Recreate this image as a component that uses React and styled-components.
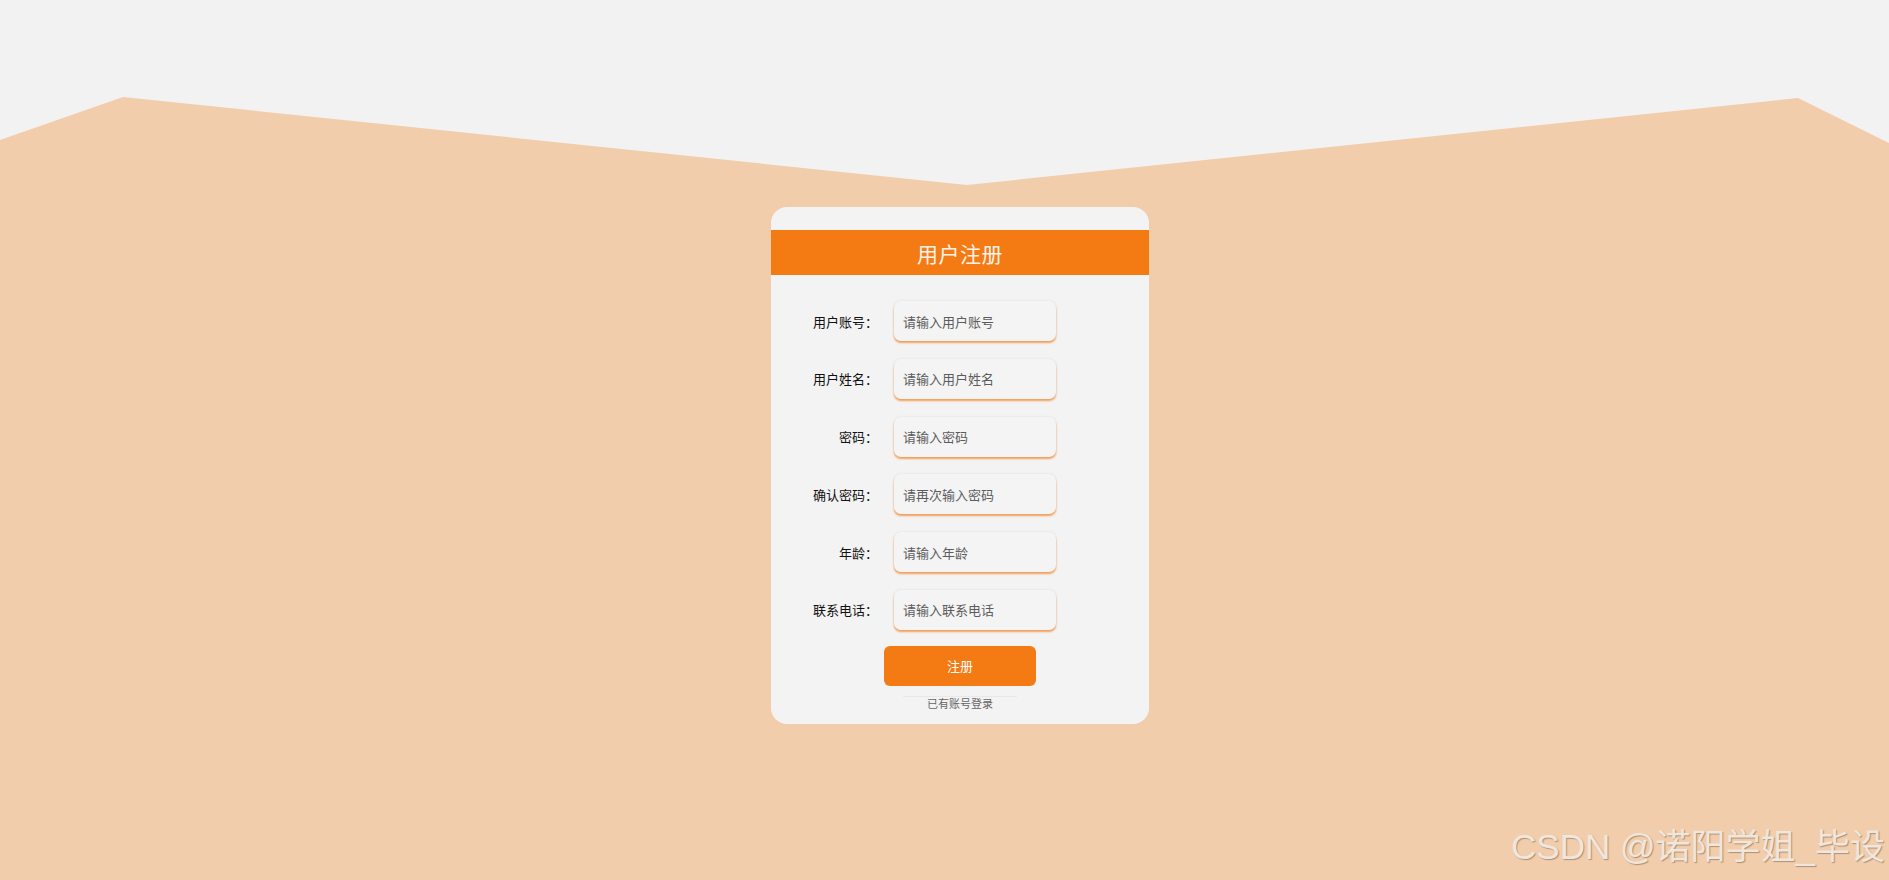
import React from 'react';
import styled, { createGlobalStyle } from 'styled-components';

const GlobalStyle = createGlobalStyle`
    html, body {
        margin: 0;
        padding: 0;
    }
    body {
        font-family: "Noto Sans CJK SC", "Noto Sans", sans-serif;
        background: #f2cdab;
    }
`;

const Page = styled.div`
    position: relative;
    min-height: 880px;
    background: #f2cdab;
    display: flex;
    justify-content: center;
    align-items: flex-start;
    padding: 207px 0 0 31px;
    box-sizing: border-box;
    overflow: hidden;

    &::before {
        content: '';
        position: absolute;
        inset: 0;
        background: #f2f2f2;
        clip-path: polygon(0 0, 100% 0, 100% 143px, 1798px 98px, 967px 185px, 123px 97px, 0 140px);
    }
`;

const Card = styled.div`
    position: relative;
    width: 378px;
    height: 517px;
    box-sizing: border-box;
    padding-top: 23px;
    background: #f3f3f3;
    border-radius: 16px;
    overflow: hidden;
`;

const Header = styled.div`
    height: 45px;
    background: #f47b14;
    color: #fbf3ea;
    font-size: 21px;
    display: flex;
    align-items: center;
    justify-content: center;
    letter-spacing: 0.5px;
`;

const Form = styled.form`
    display: flex;
    flex-direction: column;
    gap: 17.8px;
    padding-top: 26px;
`;

const Row = styled.div`
    display: flex;
    align-items: center;
    gap: 16px;
`;

const Label = styled.label`
    width: 107px;
    text-align: right;
    font-size: 13px;
    color: #111;
    white-space: nowrap;
`;

const Input = styled.input`
    width: 162px;
    height: 40px;
    box-sizing: border-box;
    border: none;
    outline: none;
    border-radius: 7px;
    background: #f4f4f4;
    padding: 0 9px;
    font-family: inherit;
    font-size: 13px;
    color: #333;
    box-shadow: 0 2px 2px rgba(244, 132, 40, 0.75), 0 0 3px rgba(0, 0, 0, 0.08);

    &::placeholder {
        color: #5c5c5c;
    }
`;

const Actions = styled.div`
    display: flex;
    flex-direction: column;
    align-items: center;
    padding-top: 16px;
`;

const Button = styled.button`
    width: 152px;
    height: 40px;
    border: none;
    border-radius: 6px;
    background: #f47b14;
    color: #fff;
    font-family: inherit;
    font-size: 13px;
    cursor: pointer;
`;

const LoginLink = styled.a`
    margin-top: 10px;
    width: 114px;
    border-top: 1px solid #e8e8e8;
    text-align: center;
    font-size: 11px;
    line-height: 12px;
    color: #666;
    text-decoration: none;
    cursor: pointer;
`;

const Watermark = styled.div`
    position: absolute;
    right: 4px;
    bottom: 11px;
    font-family: "Liberation Sans", "Noto Sans CJK SC", sans-serif;
    font-size: 35px;
    color: #efe6de;
    text-shadow: 1px 1px 1px rgba(120, 95, 70, 0.55);
    white-space: nowrap;
`;

const fields = [
    { name: 'account', label: '用户账号：', placeholder: '请输入用户账号' },
    { name: 'username', label: '用户姓名：', placeholder: '请输入用户姓名' },
    { name: 'password', label: '密码：', placeholder: '请输入密码', type: 'password' },
    { name: 'confirm', label: '确认密码：', placeholder: '请再次输入密码', type: 'password' },
    { name: 'age', label: '年龄：', placeholder: '请输入年龄' },
    { name: 'phone', label: '联系电话：', placeholder: '请输入联系电话' },
];

const App = () => {
    return (
        <>
            <GlobalStyle />
            <Page>
                <Card>
                    <Header>用户注册</Header>
                    <Form onSubmit={(e) => e.preventDefault()}>
                        {fields.map((f) => (
                            <Row key={f.name}>
                                <Label htmlFor={f.name}>{f.label}</Label>
                                <Input id={f.name} name={f.name} type={f.type || 'text'} placeholder={f.placeholder} />
                            </Row>
                        ))}
                    </Form>
                    <Actions>
                        <Button type='button'>注册</Button>
                        <LoginLink>已有账号登录</LoginLink>
                    </Actions>
                </Card>
                <Watermark>CSDN @诺阳学姐_毕设</Watermark>
            </Page>
        </>
    );
};

export default App;
